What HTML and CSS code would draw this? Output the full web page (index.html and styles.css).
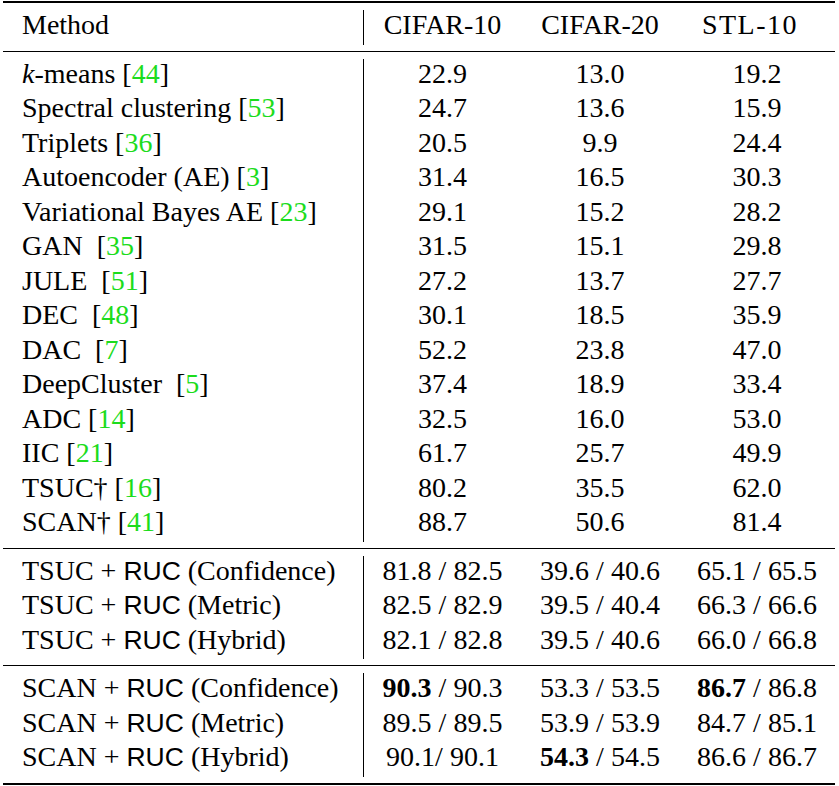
FILE: index.html
```html
<!DOCTYPE html>
<html lang="en">
<head>
<meta charset="utf-8">
<title>Clustering results</title>
<link rel="stylesheet" href="styles.css">
</head>
<body>
<div class="table">
  <div class="rule thick"></div>
  <div class="section">
    <div class="c m">Method</div><div class="c n">CIFAR-10</div><div class="c n">CIFAR-20</div><div class="c n stl">STL-10</div>
  </div>
  <div class="rule"></div>
  <div class="section">
    <div class="c m"><i>k</i>-means [<span class="cite">44</span>]</div><div class="c n">22.9</div><div class="c n">13.0</div><div class="c n">19.2</div>
    <div class="c m">Spectral clustering [<span class="cite">53</span>]</div><div class="c n">24.7</div><div class="c n">13.6</div><div class="c n">15.9</div>
    <div class="c m">Triplets [<span class="cite">36</span>]</div><div class="c n">20.5</div><div class="c n">9.9</div><div class="c n">24.4</div>
    <div class="c m">Autoencoder (AE) [<span class="cite">3</span>]</div><div class="c n">31.4</div><div class="c n">16.5</div><div class="c n">30.3</div>
    <div class="c m">Variational Bayes AE [<span class="cite">23</span>]</div><div class="c n">29.1</div><div class="c n">15.2</div><div class="c n">28.2</div>
    <div class="c m">GAN &nbsp;[<span class="cite">35</span>]</div><div class="c n">31.5</div><div class="c n">15.1</div><div class="c n">29.8</div>
    <div class="c m">JULE &nbsp;[<span class="cite">51</span>]</div><div class="c n">27.2</div><div class="c n">13.7</div><div class="c n">27.7</div>
    <div class="c m">DEC &nbsp;[<span class="cite">48</span>]</div><div class="c n">30.1</div><div class="c n">18.5</div><div class="c n">35.9</div>
    <div class="c m">DAC &nbsp;[<span class="cite">7</span>]</div><div class="c n">52.2</div><div class="c n">23.8</div><div class="c n">47.0</div>
    <div class="c m">DeepCluster &nbsp;[<span class="cite">5</span>]</div><div class="c n">37.4</div><div class="c n">18.9</div><div class="c n">33.4</div>
    <div class="c m">ADC [<span class="cite">14</span>]</div><div class="c n">32.5</div><div class="c n">16.0</div><div class="c n">53.0</div>
    <div class="c m">IIC [<span class="cite">21</span>]</div><div class="c n">61.7</div><div class="c n">25.7</div><div class="c n">49.9</div>
    <div class="c m">TSUC† [<span class="cite">16</span>]</div><div class="c n">80.2</div><div class="c n">35.5</div><div class="c n">62.0</div>
    <div class="c m">SCAN† [<span class="cite">41</span>]</div><div class="c n">88.7</div><div class="c n">50.6</div><div class="c n">81.4</div>
  </div>
  <div class="rule"></div>
  <div class="section">
    <div class="c m">TSUC + <span class="sf">RUC</span> (Confidence)</div><div class="c n">81.8 / 82.5</div><div class="c n">39.6 / 40.6</div><div class="c n">65.1 / 65.5</div>
    <div class="c m">TSUC + <span class="sf">RUC</span> (Metric)</div><div class="c n">82.5 / 82.9</div><div class="c n">39.5 / 40.4</div><div class="c n">66.3 / 66.6</div>
    <div class="c m">TSUC + <span class="sf">RUC</span> (Hybrid)</div><div class="c n">82.1 / 82.8</div><div class="c n">39.5 / 40.6</div><div class="c n">66.0 / 66.8</div>
  </div>
  <div class="rule"></div>
  <div class="section">
    <div class="c m">SCAN + <span class="sf">RUC</span> (Confidence)</div><div class="c n"><b>90.3</b> / 90.3</div><div class="c n">53.3 / 53.5</div><div class="c n"><b>86.7</b> / 86.8</div>
    <div class="c m">SCAN + <span class="sf">RUC</span> (Metric)</div><div class="c n">89.5 / 89.5</div><div class="c n">53.9 / 53.9</div><div class="c n">84.7 / 85.1</div>
    <div class="c m">SCAN + <span class="sf">RUC</span> (Hybrid)</div><div class="c n">90.1/ 90.1</div><div class="c n"><b>54.3</b> / 54.5</div><div class="c n">86.6 / 86.7</div>
  </div>
  <div class="rule thick"></div>
</div>
</body>
</html>
```

FILE: styles.css
```css
html, body {
  margin: 0;
  padding: 0;
  background: #fff;
}

body {
  padding: 1px 0 0 3px;
  font-family: "Liberation Serif", "Times New Roman", Times, serif;
  font-size: 28px;
  color: #000;
}

.table {
  width: 832px;
}

.rule {
  height: 1px;
  background: #000;
}

.rule.thick {
  height: 2px;
}

.section {
  display: grid;
  grid-template-columns: 361px 157px 158px 156px;
  padding: 7px 0 6px;
}

.c {
  box-sizing: border-box;
  height: 34.5px;
  line-height: 27px;
  padding-top: 1px;
  padding-bottom: 6.5px;
  white-space: nowrap;
}

.m {
  padding-left: 19px;
  border-right: 1px solid #000;
}

.n {
  text-align: center;
}

.stl {
  letter-spacing: 1.5px;
  padding-right: 14px;
}

.cite {
  color: #1cdc1c;
}

.sf {
  font-family: "Liberation Sans", Arial, sans-serif;
  font-size: 26.5px;
}

b {
  font-weight: bold;
}
```
